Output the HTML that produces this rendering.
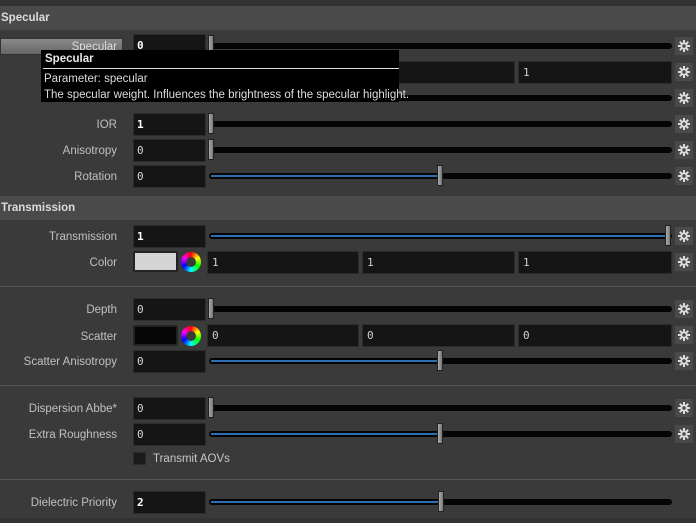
<!DOCTYPE html>
<html><head><meta charset="utf-8"><style>
*{margin:0;padding:0;box-sizing:border-box}
body{width:696px;height:523px;background:#3a3a3a;position:relative;overflow:hidden;font-family:"Liberation Sans",sans-serif;font-size:11.5px;color:#c8c8c8}
.a{position:absolute}
.hdr{position:absolute;left:0;width:696px;height:24px;background:#4a4a4a;font-weight:bold;color:#dcdcdc;font-size:11.5px;line-height:24px;padding-left:1px}
.lbl{position:absolute;right:579px;text-align:right;white-space:nowrap;color:#c0c0c0;margin-top:1px}
.fld{position:absolute;left:133px;width:73px;height:23px;background:#151515;border:1px solid #2c2c2c;font-family:"DejaVu Sans Mono","Liberation Mono",monospace;font-size:11px;line-height:21px;padding-left:3px;color:#d8d8d8}
.b{font-weight:bold;color:#fff}
.trk{position:absolute;left:209px;width:463px;height:6px;background:#050505;border-radius:3px}
.fill{position:absolute;left:2px;top:2px;height:2px;background:#2d6fb5}
.th{position:absolute;width:6px;height:21px;background:linear-gradient(90deg,#aaa,#777);border:1px solid #222}
.gear{position:absolute;left:675px;width:18px;height:18px;background:#4a4a4a}
.vec{position:absolute;height:23px;background:#151515;border:1px solid #2c2c2c;font-family:"DejaVu Sans Mono","Liberation Mono",monospace;font-size:11px;line-height:21px;padding-left:4px;color:#d0d0d0}
.sw{position:absolute;left:133px;width:45px;height:21px;border:2px solid #222;border-radius:2px}
.wheel{position:absolute;left:181px;width:20px;height:20px;border-radius:50%;background:conic-gradient(red,yellow,lime,cyan,blue,magenta,red)}
.wheel:after{content:"";position:absolute;left:5px;top:5px;width:10px;height:10px;border-radius:50%;background:#3a3a3a}
.sep{position:absolute;left:0;width:696px;height:1px;background:#555}
</style></head><body>
<div class="a" style="left:0;top:0;width:696px;height:6px;background:#333"></div>
<div class="hdr" style="top:6px">Specular</div>

<svg width="0" height="0" style="position:absolute"><defs><g id="g"><g stroke="#dcdcdc" stroke-width="2"><line x1="9" y1="3" x2="9" y2="15"/><line x1="3" y1="9" x2="15" y2="9"/><line x1="4.8" y1="4.8" x2="13.2" y2="13.2"/><line x1="13.2" y1="4.8" x2="4.8" y2="13.2"/></g><circle cx="9" cy="9" r="3.6" fill="#dcdcdc"/><circle cx="9" cy="9" r="1.8" fill="#4a4a4a"/></g></defs></svg>

<div class="a" style="left:0;top:38px;width:123px;height:17px;background:linear-gradient(#8a8a8a,#666);border:1px solid #333"></div>
<div class="lbl" style="top:40px;color:#ddd">Specular</div>
<div class="fld b" style="top:34px">0</div>
<div class="trk" style="top:43px"></div><div class="th" style="left:208px;top:35px"></div>
<svg class="gear" style="top:37px"><use href="#g"/></svg>
<div class="vec" style="left:362px;top:61px;width:153px"></div>
<div class="vec" style="left:518px;top:61px;width:154px">1</div>
<svg class="gear" style="top:63px"><use href="#g"/></svg>
<div class="trk" style="top:95px"></div>
<svg class="gear" style="top:89px"><use href="#g"/></svg>
<div class="lbl" style="top:118px">IOR</div>
<div class="fld b" style="top:113px">1</div>
<div class="trk" style="top:121px"></div><div class="th" style="left:208px;top:113px"></div>
<svg class="gear" style="top:115px"><use href="#g"/></svg>
<div class="lbl" style="top:144px">Anisotropy</div>
<div class="fld" style="top:139px">0</div>
<div class="trk" style="top:147px"></div><div class="th" style="left:208px;top:139px"></div>
<svg class="gear" style="top:141px"><use href="#g"/></svg>
<div class="lbl" style="top:170px">Rotation</div>
<div class="fld" style="top:165px">0</div>
<div class="trk" style="top:173px"><div class="fill" style="width:229px"></div></div><div class="th" style="left:437px;top:165px"></div>
<svg class="gear" style="top:167px"><use href="#g"/></svg>

<div class="a" style="left:41px;top:50px;width:358px;height:52px;background:#000;color:#ddd">
<div style="font-weight:bold;padding:3px 0 0 4px;height:18px;color:#e8e8e8">Specular</div>
<div style="height:1px;background:#ddd;margin-left:2px"></div>
<div style="padding:2px 0 0 3px;line-height:16px;white-space:nowrap">Parameter: specular<br>The specular weight. Influences the brightness of the specular highlight.</div>
</div>

<div class="hdr" style="top:196px">Transmission</div>
<div class="lbl" style="top:230px">Transmission</div>
<div class="fld b" style="top:225px">1</div>
<div class="trk" style="top:233px"><div class="fill" style="width:457px"></div></div><div class="th" style="left:665px;top:225px"></div>
<svg class="gear" style="top:227px"><use href="#g"/></svg>
<div class="lbl" style="top:256px">Color</div>
<div class="sw" style="top:251px;background:#d4d4d4"></div>
<div class="wheel" style="top:252px"></div>
<div class="vec" style="left:207px;top:251px;width:152px">1</div>
<div class="vec" style="left:362px;top:251px;width:153px">1</div>
<div class="vec" style="left:518px;top:251px;width:154px">1</div>
<svg class="gear" style="top:253px"><use href="#g"/></svg>
<div class="sep" style="top:286px"></div>
<div class="lbl" style="top:303px">Depth</div>
<div class="fld" style="top:298px">0</div>
<div class="trk" style="top:306px"></div><div class="th" style="left:208px;top:298px"></div>
<svg class="gear" style="top:300px"><use href="#g"/></svg>
<div class="lbl" style="top:330px">Scatter</div>
<div class="sw" style="top:325px;background:#050505"></div>
<div class="wheel" style="top:326px"></div>
<div class="vec" style="left:207px;top:324px;width:152px">0</div>
<div class="vec" style="left:362px;top:324px;width:153px">0</div>
<div class="vec" style="left:518px;top:324px;width:154px">0</div>
<svg class="gear" style="top:326px"><use href="#g"/></svg>
<div class="lbl" style="top:355px">Scatter Anisotropy</div>
<div class="fld" style="top:350px">0</div>
<div class="trk" style="top:358px"><div class="fill" style="width:229px"></div></div><div class="th" style="left:437px;top:350px"></div>
<svg class="gear" style="top:352px"><use href="#g"/></svg>
<div class="sep" style="top:385px"></div>
<div class="lbl" style="top:402px">Dispersion Abbe*</div>
<div class="fld" style="top:397px">0</div>
<div class="trk" style="top:405px"></div><div class="th" style="left:208px;top:397px"></div>
<svg class="gear" style="top:399px"><use href="#g"/></svg>
<div class="lbl" style="top:428px">Extra Roughness</div>
<div class="fld" style="top:423px">0</div>
<div class="trk" style="top:431px"><div class="fill" style="width:229px"></div></div><div class="th" style="left:437px;top:423px"></div>
<svg class="gear" style="top:425px"><use href="#g"/></svg>
<div class="a" style="left:133px;top:452px;width:13px;height:13px;background:#1a1a1a;border:1px solid #2c2c2c"></div>
<div class="a" style="left:153px;top:453px;color:#c8c8c8">Transmit AOVs</div>
<div class="sep" style="top:479px"></div>
<div class="lbl" style="top:496px">Dielectric Priority</div>
<div class="fld b" style="top:491px">2</div>
<div class="trk" style="top:499px"><div class="fill" style="width:229px"></div></div><div class="th" style="left:438px;top:491px"></div>
<div class="a" style="left:0;top:518px;width:696px;height:5px;background:#333"></div>
</body></html>
